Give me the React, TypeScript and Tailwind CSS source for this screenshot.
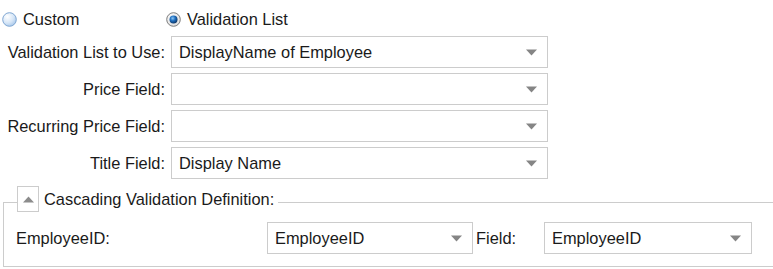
import React from "react";

const font = { fontFamily: '"Liberation Sans", Arial, Helvetica, sans-serif' };

function RadioUnchecked() {
  return (
    <svg width="15" height="15" viewBox="0 0 15 15">
      <defs>
        <radialGradient id="ru" cx="35%" cy="30%" r="75%">
          <stop offset="0%" stopColor="#ffffff" />
          <stop offset="60%" stopColor="#d6e6f7" />
          <stop offset="100%" stopColor="#a9c8ea" />
        </radialGradient>
      </defs>
      <circle cx="7.5" cy="7.5" r="6.8" fill="url(#ru)" stroke="#7fa6d2" strokeWidth="1" />
    </svg>
  );
}

function RadioChecked() {
  return (
    <svg width="15" height="15" viewBox="0 0 15 15">
      <defs>
        <radialGradient id="rcOuter" cx="40%" cy="35%" r="70%">
          <stop offset="0%" stopColor="#ffffff" />
          <stop offset="100%" stopColor="#dcdcdc" />
        </radialGradient>
        <radialGradient id="rcInner" cx="40%" cy="35%" r="70%">
          <stop offset="0%" stopColor="#8cc6f5" />
          <stop offset="45%" stopColor="#1f6fbf" />
          <stop offset="100%" stopColor="#0a2f5e" />
        </radialGradient>
      </defs>
      <circle cx="7.5" cy="7.5" r="6.8" fill="url(#rcOuter)" stroke="#7d7d7d" strokeWidth="1" />
      <circle cx="7.5" cy="7.5" r="4" fill="url(#rcInner)" />
    </svg>
  );
}

function DownArrow() {
  return (
    <svg width="11" height="7" viewBox="0 0 11 7" className="shrink-0">
      <polygon points="0,0.5 11,0.5 5.5,6.5" fill="#858585" />
    </svg>
  );
}

function Select({ value, className }: { value?: string; className: string }) {
  return (
    <div
      className={`h-[32px] border border-[#cccccc] bg-white flex items-center justify-between pl-[7px] pr-[10px] text-[#1a1a1a] ${className}`}
    >
      <span>{value ?? ""}</span>
      <DownArrow />
    </div>
  );
}

export default function App() {
  const rows: { label: string; value?: string }[] = [
    { label: "Validation List to Use:", value: "DisplayName of Employee" },
    { label: "Price Field:" },
    { label: "Recurring Price Field:" },
    { label: "Title Field:", value: "Display Name" },
  ];
  return (
    <div className="w-[773px] h-[269px] overflow-hidden bg-white text-[#1a1a1a] text-[16.4px]" style={font}>
      <div className="pt-[8px]">
        <div className="flex items-center h-[22px] pl-[2px]">
          <div className="flex items-center w-[164px]">
            <RadioUnchecked />
            <span className="ml-[6px]">Custom</span>
          </div>
          <div className="flex items-center">
            <RadioChecked />
            <span className="ml-[6px]">Validation List</span>
          </div>
        </div>
        <div className="mt-[6px] grid grid-cols-[165px_377px] gap-x-[6px] gap-y-[5px] items-center">
          {rows.map((r) => (
            <React.Fragment key={r.label}>
              <div className="text-right leading-[32px] whitespace-nowrap">{r.label}</div>
              <Select value={r.value} className="w-[377px]" />
            </React.Fragment>
          ))}
        </div>
        <fieldset className="mt-[7px] ml-[3px] w-[800px] border border-[#cccccc] px-[12px] pt-[4px] pb-[12px]">
          <legend className="ml-[1px] pb-[6px] pr-[4px]">
            <div className="flex items-center">
              <div className="w-[22px] h-[26px] border border-[#cccccc] bg-white flex items-center justify-center">
                <svg width="11" height="7" viewBox="0 0 11 7">
                  <polygon points="0,6.5 11,6.5 5.5,0.5" fill="#8c8c8c" />
                </svg>
              </div>
              <span className="ml-[5px]">Cascading Validation Definition:</span>
            </div>
          </legend>
          <div className="flex items-center">
            <div className="w-[251px]">EmployeeID:</div>
            <Select value="EmployeeID" className="w-[206px]" />
            <div className="w-[71px] pl-[3px]">Field:</div>
            <Select value="EmployeeID" className="w-[208px]" />
          </div>
        </fieldset>
      </div>
    </div>
  );
}
